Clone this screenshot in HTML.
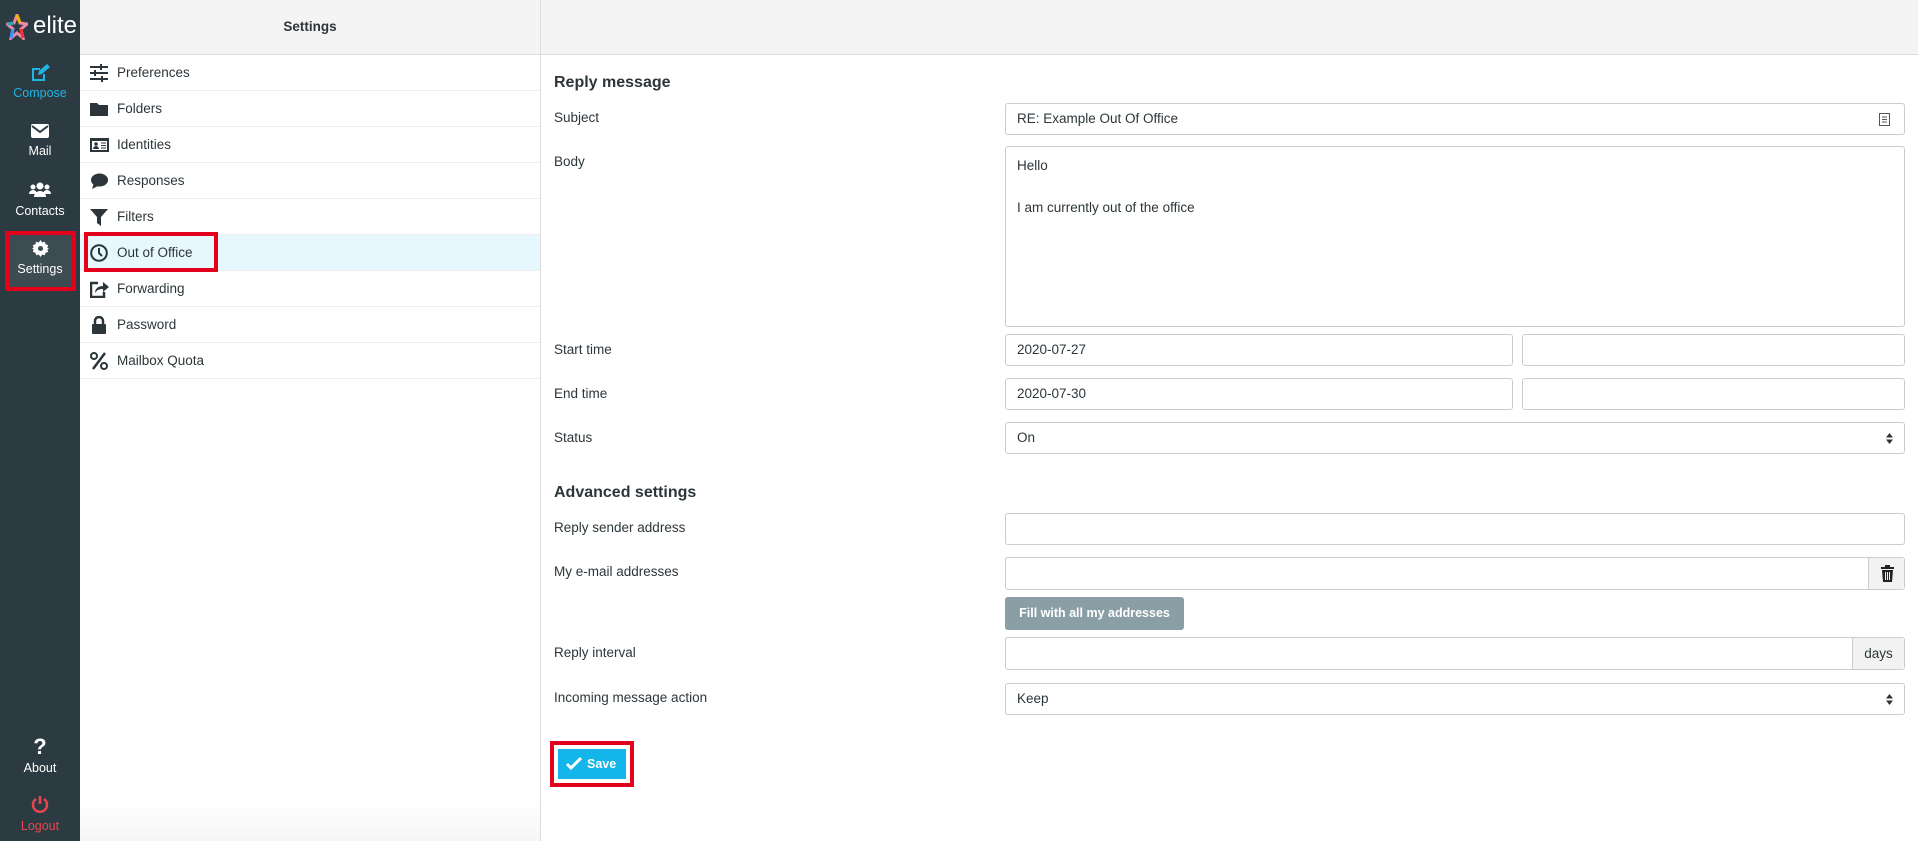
<!DOCTYPE html>
<html><head><meta charset="utf-8"><style>
*{box-sizing:border-box;margin:0;padding:0}
body{width:1918px;height:841px;overflow:hidden;font-family:"Liberation Sans",sans-serif;color:#2c363a;background:#fff;position:relative;font-size:13px}
.abs{position:absolute}
#side{left:0;top:0;width:80px;height:841px;background:#2c3a41}
.nav{position:absolute;left:0;width:80px;text-align:center;color:#fff;font-size:12.5px}
.nav svg{display:block;margin:0 auto}
#list{left:80px;top:0;width:461px;height:841px;border-right:1px solid #ddd;background:#fff}
.hdr{height:55px;background:#f4f4f4;border-bottom:1px solid #ddd}
.item{position:absolute;left:0;width:460px;height:36px;border-bottom:1px solid #eee;font-size:13.5px;line-height:36px;padding-left:37px}
.item svg{position:absolute;left:10px;top:9px}
.lbl{position:absolute;left:554px;font-size:13.5px}
.inp{position:absolute;border:1px solid #ccc;border-radius:3px;background:#fff;font-size:13.5px;padding-left:11px}
h3{position:absolute;left:554px;font-size:16px;font-weight:bold}
.arr{position:absolute;right:11px;top:10px;width:7px;height:11px}
</style></head><body>
<div id="side" class="abs">
 <div class="abs" style="left:6px;top:14px;width:20px;height:24px">
  <svg width="22" height="26" viewBox="0 0 22 26"><path d="M11 1 L14 9 L21 10 L15 15 L17 24 L11 19 L5 24 L7 15 L1 10 L8 9Z" fill="none" stroke="#e8a" stroke-width="3"/><path d="M11 1 L14 9" stroke="#f6b400" stroke-width="3"/><path d="M1 10 L8 9" stroke="#2ab" stroke-width="3"/><path d="M5 24 L7 15" stroke="#39f" stroke-width="3"/><path d="M17 24 L15 15" stroke="#e33" stroke-width="3"/></svg>
 </div>
 <div class="abs" style="left:33px;top:12px;color:#fff;font-size:24px">elite</div>
 <div class="nav" style="top:64px;color:#1fb6e6"><svg width="20" height="18" viewBox="0 0 20 18"><path d="M2 4h8v2H4v9h9v-5h2v7H2z" fill="#1fb6e6"/><path d="M8 11l1-4 8-7 3 3-8 7z" fill="#1fb6e6"/></svg><div style="margin-top:4px">Compose</div></div>
 <div class="nav" style="top:124px"><svg width="18" height="14" viewBox="0 0 18 14"><rect width="18" height="14" rx="2" fill="#fff"/><path d="M1 2l8 6 8-6" stroke="#2c3a41" stroke-width="2" fill="none"/></svg><div style="margin-top:6px">Mail</div></div>
 <div class="nav" style="top:182px"><svg width="22" height="16" viewBox="0 0 22 16"><circle cx="11" cy="4" r="3.5" fill="#fff"/><circle cx="4" cy="5" r="2.5" fill="#fff"/><circle cx="18" cy="5" r="2.5" fill="#fff"/><path d="M5 15a6 6 0 0112 0z" fill="#fff"/><path d="M0 12a4 4 0 018 0zM14 12a4 4 0 018 0z" fill="#fff"/></svg><div style="margin-top:6px">Contacts</div></div>
 <div class="abs" style="left:5px;top:231px;width:71px;height:60px;border:4px solid #e3001b;background:#3d4b52"></div>
 <div class="nav" style="top:240px"><svg width="17" height="17" viewBox="0 0 20 20"><path d="M10 0l2 3 3-1 1 3 3 1-1 3 2 1-2 1 1 3-3 1-1 3-3-1-2 3-2-3-3 1-1-3-3-1 1-3-2-1 2-1-1-3 3-1 1-3 3 1z" fill="#fff"/><circle cx="10" cy="10" r="3" fill="#3d4b52"/></svg><div style="margin-top:5px">Settings</div></div>
 <div class="nav" style="top:736px"><div style="font-size:22px;font-weight:bold;line-height:22px">?</div><div style="margin-top:3px">About</div></div>
 <div class="nav" style="top:795px;color:#e8474f"><svg width="18" height="18" viewBox="0 0 18 18"><path d="M5 4a7 7 0 108 0" stroke="#e8474f" stroke-width="2.5" fill="none"/><path d="M9 1v8" stroke="#e8474f" stroke-width="2.5"/></svg><div style="margin-top:6px">Logout</div></div>
</div>
<div id="list" class="abs">
 <div class="hdr" style="text-align:center;line-height:54px;font-weight:bold;font-size:13.5px">Settings</div>
 <div class="item" style="top:55px"><svg width="18" height="18" viewBox="0 0 18 18"><path d="M0 3h18M0 9h18M0 15h18" stroke="#2c363a" stroke-width="2"/><path d="M11 0v6M5 6v6M12 12v6" stroke="#2c363a" stroke-width="2"/></svg>Preferences</div>
 <div class="item" style="top:91px"><svg width="18" height="18" viewBox="0 0 18 18"><path d="M0 3h7l2 2h9v11H0z" fill="#2c363a"/></svg>Folders</div>
 <div class="item" style="top:127px"><svg width="19" height="18" viewBox="0 0 19 18"><rect x="0" y="2" width="19" height="14" fill="#2c363a"/><rect x="2" y="5" width="15" height="9" fill="#fff"/><circle cx="6" cy="8" r="1.8" fill="#2c363a"/><path d="M3 13a3 3 0 016 0z" fill="#2c363a"/><path d="M11 7h5M11 9.5h5M11 12h5" stroke="#2c363a"/></svg>Identities</div>
 <div class="item" style="top:163px"><svg width="18" height="18" viewBox="0 0 18 18"><ellipse cx="9.5" cy="8" rx="8.5" ry="6.5" fill="#2c363a"/><path d="M2 17l2-6 4 3z" fill="#2c363a"/></svg>Responses</div>
 <div class="item" style="top:199px"><svg width="18" height="18" viewBox="0 0 18 18"><path d="M0 1h18l-7 8v9l-4-3V9z" fill="#2c363a"/></svg>Filters</div>
 <div class="item" style="top:235px;background:#e6f7fd"><svg width="18" height="18" viewBox="0 0 18 18"><circle cx="9" cy="9" r="7.8" stroke="#2c363a" stroke-width="2" fill="none"/><path d="M9 4v5l3 3" stroke="#2c363a" stroke-width="2" fill="none"/></svg>Out of Office</div>
 <div class="item" style="top:271px"><svg width="19" height="18" viewBox="0 0 19 18"><path d="M8 3H1v14h13v-5" stroke="#2c363a" stroke-width="2.5" fill="none"/><path d="M5 13c0-5 4-7 8-7V2l6 5-6 5V9c-4 0-6 1-8 4z" fill="#2c363a"/></svg>Forwarding</div>
 <div class="item" style="top:307px"><svg width="18" height="18" viewBox="0 0 18 18"><rect x="2" y="8" width="14" height="10" rx="1" fill="#2c363a"/><path d="M5 8V5a4 4 0 018 0v3" stroke="#2c363a" stroke-width="2.5" fill="none"/></svg>Password</div>
 <div class="item" style="top:343px"><svg width="18" height="18" viewBox="0 0 18 18"><circle cx="4" cy="4" r="3" stroke="#2c363a" stroke-width="2" fill="none"/><circle cx="14" cy="14" r="3" stroke="#2c363a" stroke-width="2" fill="none"/><path d="M15 1L3 17" stroke="#2c363a" stroke-width="2.5"/></svg>Mailbox Quota</div>
 <div class="abs" style="left:4px;top:232px;width:134px;height:40px;border:4px solid #e3001b"></div>
 <div class="abs" style="left:0;top:800px;width:460px;height:41px;background:linear-gradient(#fff,#f6f6f6)"></div>
</div>
<div class="abs" style="left:541px;top:0;width:1377px;height:55px;background:#f4f4f4;border-bottom:1px solid #ddd"></div>
<h3 style="top:74px">Reply message</h3>
<div class="lbl" style="top:110px">Subject</div>
<div class="inp" style="left:1005px;top:103px;width:900px;height:32px;line-height:30px">RE: Example Out Of Office<svg class="abs" style="right:14px;top:9px" width="11" height="13" viewBox="0 0 11 13"><rect x=".5" y=".5" width="10" height="12" fill="none" stroke="#555"/><path d="M3 4h5M3 6.5h5M3 9h5" stroke="#555"/></svg></div>
<div class="lbl" style="top:154px">Body</div>
<div class="inp" style="left:1005px;top:146px;width:900px;height:181px;padding-top:8px;line-height:21px">Hello<br><br>I am currently out of the office</div>
<div class="lbl" style="top:342px">Start time</div>
<div class="inp" style="left:1005px;top:334px;width:508px;height:32px;line-height:30px">2020-07-27</div>
<div class="inp" style="left:1522px;top:334px;width:383px;height:32px"></div>
<div class="lbl" style="top:386px">End time</div>
<div class="inp" style="left:1005px;top:378px;width:508px;height:32px;line-height:30px">2020-07-30</div>
<div class="inp" style="left:1522px;top:378px;width:383px;height:32px"></div>
<div class="lbl" style="top:430px">Status</div>
<div class="inp" style="left:1005px;top:422px;width:900px;height:32px;line-height:30px">On<svg class="arr" viewBox="0 0 7 11"><path d="M0 4.5L3.5 0 7 4.5zM0 6.5L3.5 11 7 6.5z" fill="#333"/></svg></div>
<h3 style="top:484px">Advanced settings</h3>
<div class="lbl" style="top:520px">Reply sender address</div>
<div class="inp" style="left:1005px;top:513px;width:900px;height:32px"></div>
<div class="lbl" style="top:564px">My e-mail addresses</div>
<div class="inp" style="left:1005px;top:557px;width:900px;height:33px"><div class="abs" style="right:0;top:0;width:36px;height:31px;background:#f2f2f2;border-left:1px solid #ccc"><svg class="abs" style="left:12px;top:7px" width="13" height="17" viewBox="0 0 13 17"><path d="M0 2h13v2H0zM4 0h5v2H4z" fill="#222"/><path d="M1 5h11l-1 12H2z" fill="#222"/><path d="M4.5 7v8M6.5 7v8M8.5 7v8" stroke="#f2f2f2"/></svg></div></div>
<div class="abs" style="left:1005px;top:597px;width:179px;height:33px;background:#8a9ea5;border-radius:3px;color:#fff;font-weight:bold;font-size:12.5px;text-align:center;line-height:33px">Fill with all my addresses</div>
<div class="lbl" style="top:645px">Reply interval</div>
<div class="inp" style="left:1005px;top:637px;width:900px;height:33px"><div class="abs" style="right:0;top:0;width:52px;height:31px;background:#f2f2f2;border-left:1px solid #ccc;text-align:center;line-height:31px">days</div></div>
<div class="lbl" style="top:690px">Incoming message action</div>
<div class="inp" style="left:1005px;top:683px;width:900px;height:32px;line-height:30px">Keep<svg class="arr" viewBox="0 0 7 11"><path d="M0 4.5L3.5 0 7 4.5zM0 6.5L3.5 11 7 6.5z" fill="#333"/></svg></div>
<div class="abs" style="left:550px;top:741px;width:84px;height:46px;border:4px solid #e3001b;padding:4px">
 <div style="width:68px;height:30px;background:#13b5ea;color:#fff;font-weight:bold;font-size:12.5px;line-height:30px;padding-left:8px"><svg width="16" height="13" viewBox="0 0 16 13" style="vertical-align:-2px;margin-right:5px"><path d="M1 7l4 4 10-10" stroke="#fff" stroke-width="3" fill="none"/></svg>Save</div>
</div>
</body></html>
